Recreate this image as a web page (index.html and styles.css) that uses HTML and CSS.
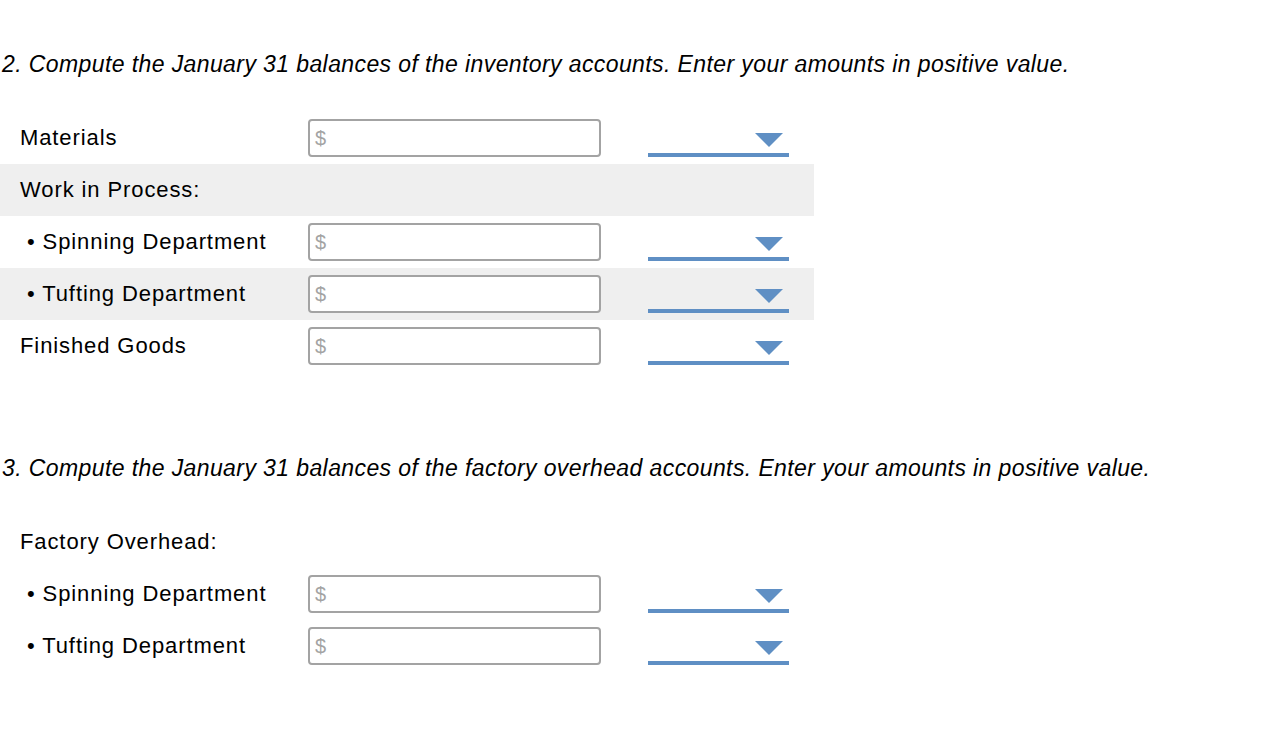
FILE: index.html
```html
<!DOCTYPE html>
<html>
<head>
<meta charset="utf-8">
<link rel="stylesheet" href="styles.css">
</head>
<body>
<div class="page">
  <section class="part">
    <h2 class="question">2. Compute the January 31 balances of the inventory accounts. Enter your amounts in positive value.</h2>
    <div class="table">
      <div class="row">
        <div class="label">Materials</div>
        <div class="amount"><span class="dollar">$</span></div>
        <div class="select"><span class="caret"></span></div>
      </div>
      <div class="row shaded">
        <div class="label">Work in Process:</div>
      </div>
      <div class="row">
        <div class="label sub">• Spinning Department</div>
        <div class="amount"><span class="dollar">$</span></div>
        <div class="select"><span class="caret"></span></div>
      </div>
      <div class="row shaded">
        <div class="label sub">• Tufting Department</div>
        <div class="amount"><span class="dollar">$</span></div>
        <div class="select"><span class="caret"></span></div>
      </div>
      <div class="row">
        <div class="label">Finished Goods</div>
        <div class="amount"><span class="dollar">$</span></div>
        <div class="select"><span class="caret"></span></div>
      </div>
    </div>
  </section>
  <section class="part">
    <h2 class="question">3. Compute the January 31 balances of the factory overhead accounts. Enter your amounts in positive value.</h2>
    <div class="table">
      <div class="row">
        <div class="label">Factory Overhead:</div>
      </div>
      <div class="row">
        <div class="label sub">• Spinning Department</div>
        <div class="amount"><span class="dollar">$</span></div>
        <div class="select"><span class="caret"></span></div>
      </div>
      <div class="row">
        <div class="label sub">• Tufting Department</div>
        <div class="amount"><span class="dollar">$</span></div>
        <div class="select"><span class="caret"></span></div>
      </div>
    </div>
  </section>
</div>
</body>
</html>
```

FILE: styles.css
```css
html, body {
  margin: 0;
  padding: 0;
  background: #ffffff;
}
body {
  font-family: "Liberation Sans", Arial, Helvetica, sans-serif;
  color: #000;
}
.page {
  padding-top: 51px;
}
.part {
  margin-bottom: 83px;
}
.question {
  margin: 0 0 35px 2px;
  font-size: 23px;
  line-height: 26px;
  letter-spacing: 0.4px;
  font-style: italic;
  font-weight: normal;
  white-space: nowrap;
}
.table {
  width: 814px;
}
.row {
  height: 52px;
  display: flex;
  align-items: center;
}
.row.shaded {
  background: #efefef;
}
.label {
  width: 287px;
  padding-left: 20px;
  font-size: 22px;
  line-height: 24px;
  letter-spacing: 0.9px;
  white-space: nowrap;
}
.label.sub {
  width: 280px;
  padding-left: 27px;
}
.amount {
  box-sizing: border-box;
  width: 293px;
  height: 38px;
  margin-left: 1px;
  border: 2px solid #a3a3a3;
  border-radius: 4px;
  background: #fff;
  display: flex;
  align-items: center;
  padding-left: 5px;
}
.dollar {
  color: #a3a3a3;
  font-size: 20px;
  line-height: 22px;
}
.select {
  box-sizing: border-box;
  width: 141px;
  height: 38px;
  margin-left: 47px;
  border-bottom: 4px solid #5f8fc4;
  position: relative;
}
.caret {
  position: absolute;
  right: 6px;
  top: 14px;
  width: 0;
  height: 0;
  border-left: 14.5px solid transparent;
  border-right: 14.5px solid transparent;
  border-top: 14px solid #5f8fc4;
}
```
